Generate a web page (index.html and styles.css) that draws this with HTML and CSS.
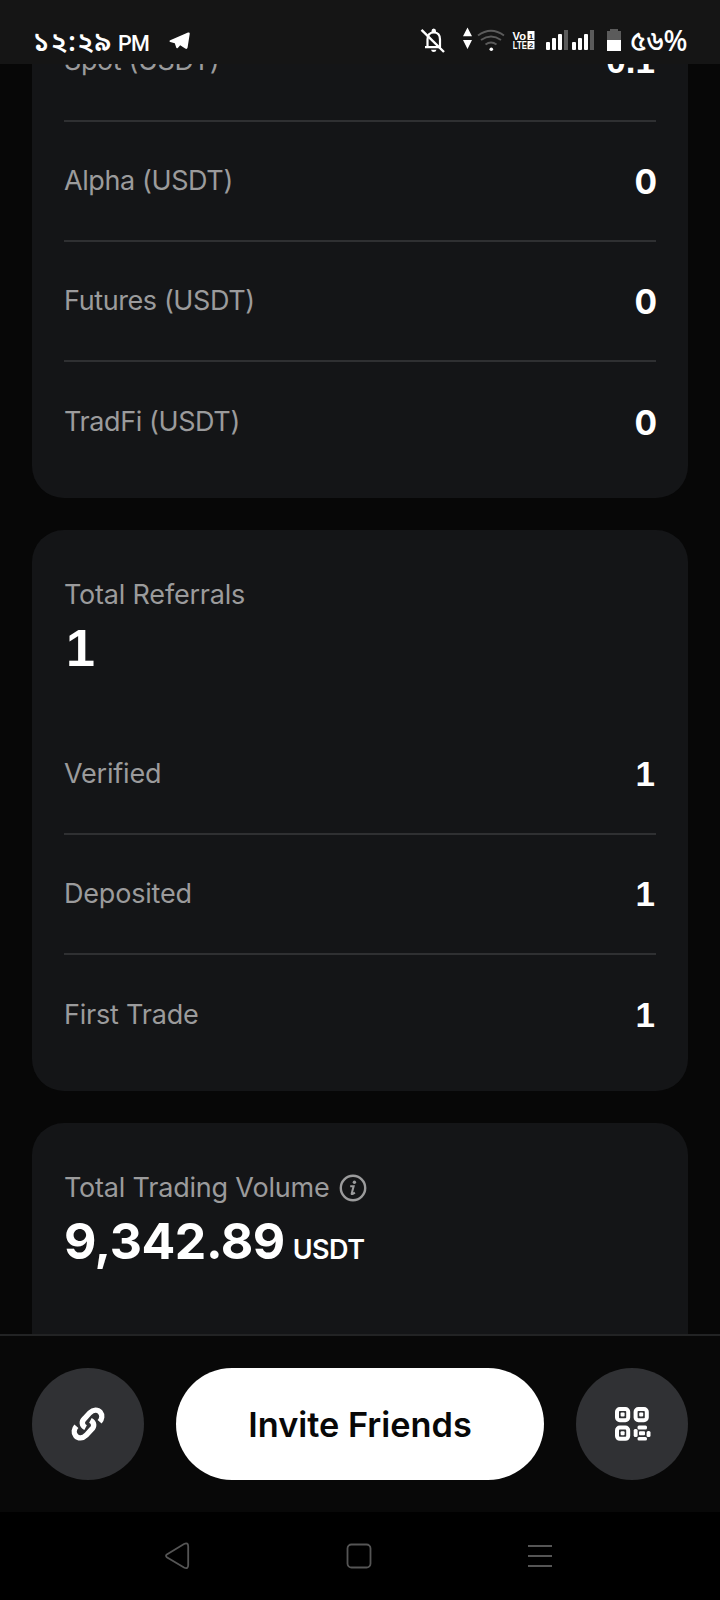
FILE: index.html
```html
<!DOCTYPE html>
<html lang="en">
<head>
<meta charset="utf-8">
<title>Referral</title>
<link rel="stylesheet" href="styles.css">
</head>
<body>
<div class="phone">
  <header class="status">
    <span class="clock">১২:২৯</span>
    <span class="meridiem">PM</span>
    <svg class="plane" width="22" height="20" viewBox="0 0 22 20"><path fill="#fff" d="M1.200 8.200L19 .6Q21 0 20.700 2L18.600 15.600Q18 17.600 16.200 16.500L11.200 13.200L9 15.800Q7.700 17 7.200 15.500L5.800 11.200L1.200 9.900Q-.4 9.100 1.200 8.200Z"/></svg>
    <svg class="indicators" width="202" height="30" viewBox="420 25 202 30">
      <g fill="none" stroke="#fff" stroke-width="2.200">
        <path d="M427.500 47V39.500Q427.500 32.500 433.800 32.500Q440 32.500 440 39.500V47M425 47.200H441"/>
        <path stroke-width="2.400" d="M421.500 29.800L444 52"/>
      </g>
      <path fill="#fff" d="M431.500 31Q431.500 28.500 433.800 28.500Q436 28.500 436 31V33H431.500ZM431 49.800H436.500Q436 52 433.800 52Q431.500 52 431 49.800Z"/>
      <path fill="#fff" d="M463 36.300L467.500 27.500L472 36.300ZM463 40L467.500 49L472 40Z"/>
      <path fill="none" stroke="#5b5b5b" stroke-width="1.900" d="M478 35.500Q491 26 504 35.500M481 40Q491 33 501 40M485.500 44.500Q491 40.500 496.500 44.500"/>
      <circle cx="491.300" cy="49.300" r="1.800" fill="#fff"/>
      <text x="512.500" y="39.500" class="tiny" textLength="13.500" lengthAdjust="spacingAndGlyphs">Vo</text>
      <text x="512.800" y="49.300" class="tiny" textLength="14" lengthAdjust="spacingAndGlyphs">LTE</text>
      <path fill="#fff" d="M527.500 31h7v9h-7zM527.500 41h7v8.300h-7z"/>
      <text x="528.800" y="38.500" class="tiny dark">1</text>
      <text x="528.800" y="48" class="tiny dark">2</text>
      <g fill="#fff">
        <rect x="546" y="42" width="4" height="8" rx="1"/><rect x="552" y="38" width="4" height="12" rx="1"/><rect x="558" y="34" width="4" height="16" rx="1"/>
        <rect x="572" y="42" width="4" height="8" rx="1"/><rect x="578" y="38" width="4" height="12" rx="1"/><rect x="584" y="34" width="4" height="16" rx="1"/>
      </g>
      <path fill="#5b5b5b" d="M564 30h4v20h-4zM590 30h4v20h-4zM610 29h8v2h3v9h-14v-9h3z"/>
      <path fill="#fff" d="M607 40h14v11h-14z"/>
    </svg>
    <span class="charge">৫৬%</span>
  </header>

  <main class="scroll">
    <section class="card">
      <div class="row"><span class="label usdt">Spot (USDT)</span><span class="value one">0.1</span></div>
      <div class="row"><span class="label usdt">Alpha (USDT)</span><span class="value">0</span></div>
      <div class="row"><span class="label usdt">Futures (USDT)</span><span class="value">0</span></div>
      <div class="row"><span class="label usdt">TradFi (USDT)</span><span class="value">0</span></div>
    </section>
    <section class="card">
      <div class="summary">
        <div class="title"><span class="label">Total Referrals</span></div>
        <div class="total"><span class="big single">1</span></div>
      </div>
      <div class="row"><span class="label">Verified</span><span class="value one">1</span></div>
      <div class="row"><span class="label">Deposited</span><span class="value one">1</span></div>
      <div class="row"><span class="label">First Trade</span><span class="value one">1</span></div>
    </section>
    <section class="card open">
      <div class="summary">
        <div class="title"><span class="label">Total Trading Volume</span>
          <svg class="info" width="28" height="28" viewBox="0 0 28 28"><circle cx="14" cy="14" r="12.200" fill="none" stroke="#9b9b9c" stroke-width="2.400"/><circle cx="15.400" cy="8.300" r="1.700" fill="#9b9b9c"/><path d="M11.200 12.300H14.600L12.700 19.600Q12.500 20.800 15.900 18.600" fill="none" stroke="#9b9b9c" stroke-width="2.100"/></svg>
        </div>
        <div class="total"><span class="big">9,342.89</span><span class="unit">USDT</span></div>
      </div>
    </section>
  </main>

  <footer class="actions">
    <button class="round"><svg width="34" height="34" viewBox="-.3 -.3 34 34"><path fill="none" stroke="#fff" stroke-width="5.400" d="M14.300 20.300C10 18 10.300 14 13 11.500L18.500 5.500C22 2 26.500 2 29 5C31.500 8 30.500 12 28.300 14.500M19.100 13.100C23.400 15.400 23.100 19.400 20.400 21.900L14.900 27.900C11.400 31.400 6.900 31.400 4.400 28.400C1.900 25.400 2.900 21.400 5.100 18.900"/></svg></button>
    <button class="invite">Invite Friends</button>
    <button class="round"><svg class="qr" width="36" height="34" viewBox="0 0 36 34"><g fill="none" stroke="#fff" stroke-width="4"><rect x="2" y="2" width="11.200" height="11.200" rx="2.800"/><rect x="20.600" y="2" width="11.200" height="11.200" rx="2.800"/><rect x="2" y="20.600" width="11.200" height="11.200" rx="2.800"/></g><g fill="#fff"><rect x="5.600" y="5.600" width="4" height="4" rx="1"/><rect x="24.200" y="5.600" width="4" height="4" rx="1"/><rect x="5.600" y="24.200" width="4" height="4" rx="1"/><rect x="22.500" y="18.600" width="9.500" height="3.900" rx="1.500"/><rect x="18.700" y="22" width="3.900" height="8" rx="1.500"/><rect x="24" y="24.200" width="6" height="4" rx="1"/><rect x="31.600" y="24" width="3.900" height="6" rx="1.500"/><rect x="22.500" y="29.900" width="9.500" height="3.700" rx="1.500"/></g></svg></button>
  </footer>

  <nav class="system">
    <svg width="26" height="28" viewBox="0 0 26 28"><path d="M1.800 12.400L19 2Q23.200 0 23.200 4.500V23Q23.200 27.500 19 25.500L1.800 15.200Q.2 13.800 1.800 12.400Z"/></svg>
    <svg width="26" height="26" viewBox="0 0 26 26"><rect x="1.500" y="1.500" width="23" height="23" rx="4"/></svg>
    <svg width="26" height="26" viewBox="0 0 26 26"><path d="M1 3H25M1 13H25M1 23H25"/></svg>
  </nav>
</div>
</body>
</html>
```
FILE: styles.css
```css
* { box-sizing: border-box; }
body { margin: 0; background: #070707; }
.phone {
  width: 720px; height: 1600px; overflow: hidden;
  display: flex; flex-direction: column;
  color: #fff; font-family: Inter, "Liberation Sans", sans-serif;
}
.status {
  flex: none; height: 64px; background: #151515; padding: 18px 33px 0 33px;
  display: flex; align-items: center; white-space: nowrap;
}
.clock { width: 79px; margin-top: 5px; letter-spacing: 1.400px; font: 600 27px/28px "Noto Sans Bengali", "Noto Sans", sans-serif; }
.meridiem { margin: 6px 0 0 6px; font: 500 21.500px/24px Roboto, sans-serif; letter-spacing: -0.700px; }
.plane { margin: 2px 0 0 20px; }
.indicators { margin-left: auto; margin-top: -2px; }
.tiny { font: 700 11px "Liberation Sans", sans-serif; fill: #fff; }
.dark { font-size: 8px; fill: #151515; }
.charge { margin: 6px 0 0 8px; width: 57px; font: 500 28px/28px "Noto Sans Bengali", "Noto Sans", sans-serif; }

.scroll { flex: none; height: 1270px; overflow: hidden; padding: 0 32px; }
.card { background: #141517; border-radius: 32px; padding: 0 32px 16px; margin-bottom: 32px; }
.card:first-child { margin-top: -62px; }
.card.open { padding-bottom: 80px; }
.row { height: 120px; display: flex; align-items: center; justify-content: space-between; border-bottom: 2px solid #2f3032; }
.row:last-child { border-bottom: 0; }
.label { color: #9b9b9c; font-size: 27px; line-height: 36px; letter-spacing: -0.200px; }
.usdt { letter-spacing: -0.400px; }
.value { font: 700 33.500px/40px Inter, sans-serif; margin-right: -1px; padding-top: 1px; }
.value.one { font: 700 35px/40px "Liberation Sans", sans-serif; margin-right: 1px; padding-top: 0; }
.summary { height: 185px; padding-top: 47px; }
.title { display: flex; align-items: center; height: 36px; }
.info { margin: -1px 0 0 9px; }
.total { display: flex; align-items: baseline; height: 68px; }
.big { font: 700 50px/70px Inter, sans-serif; letter-spacing: -0.450px; }
.big.single { font: 700 52px/70px "Liberation Sans", sans-serif; margin-left: 2px; }
.unit { font-size: 27px; font-weight: 600; margin-left: 8px; letter-spacing: -0.600px; }

.actions {
  flex: none; height: 178px; border-top: 2px solid #222324; background: #080808;
  padding: 32px; display: flex; gap: 32px;
}
.round, .invite { border: 0; padding: 0; display: flex; align-items: center; justify-content: center; height: 112px; border-radius: 56px; }
.round { width: 112px; background: #303134; color: #fff; }
.qr { margin-left: 2px; }
.invite { flex: 1; background: #fff; color: #080808; font: 600 34.300px Inter, sans-serif; }
.system { flex: none; height: 88px; background: #000; padding: 0 167px 0 165px; display: flex; align-items: center; justify-content: space-between; }
.system svg { fill: none; stroke: #555; stroke-width: 1.800px; }
```
